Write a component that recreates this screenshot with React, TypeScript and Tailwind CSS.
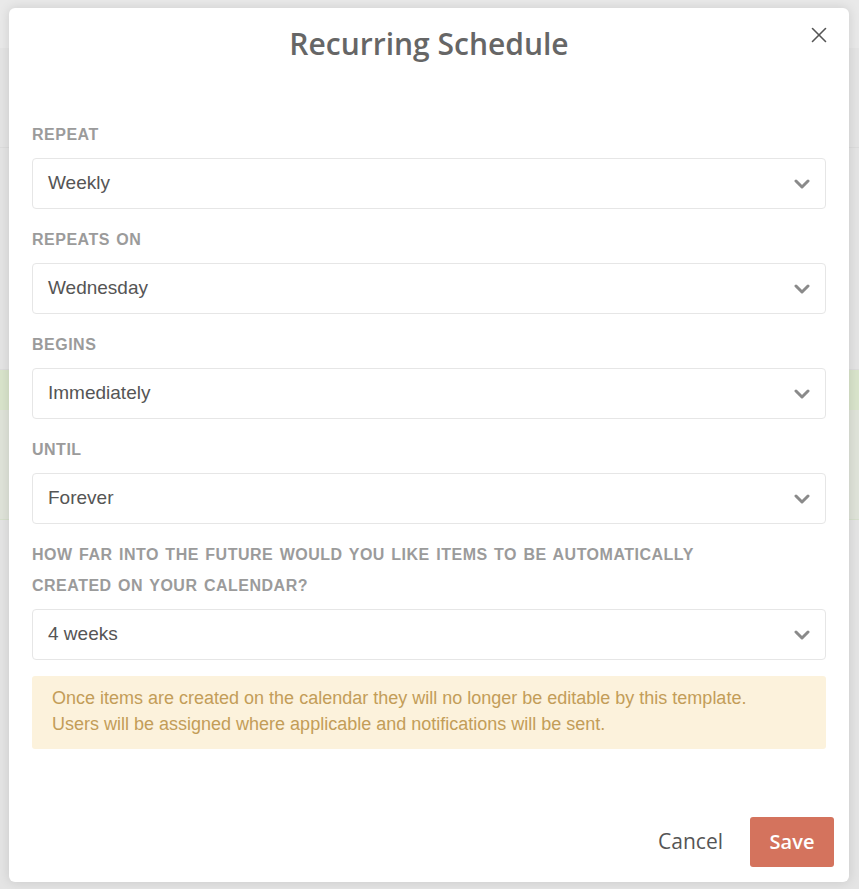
import { X } from "lucide-react";

const fields = [
  { label: "REPEAT", value: "Weekly" },
  { label: "REPEATS ON", value: "Wednesday" },
  { label: "BEGINS", value: "Immediately" },
  { label: "UNTIL", value: "Forever" },
  {
    label: "HOW FAR INTO THE FUTURE WOULD YOU LIKE ITEMS TO BE AUTOMATICALLY CREATED ON YOUR CALENDAR?",
    value: "4 weeks",
  },
];

const Chevron = () => (
  <svg width="16" height="12" viewBox="0 0 16 12" className="shrink-0">
    <polyline points="2,3 8,9 14,3" fill="none" stroke="#8a8a8a" strokeWidth="3" strokeLinecap="round" strokeLinejoin="round" />
  </svg>
);

const SelectField = ({ label, value }: { label: string; value: string }) => (
  <div className="mt-[15px] first:mt-0">
    <div className="mb-2 pr-[100px] text-[16px] font-bold leading-[31px] tracking-[0.5px] text-[#9b9b9b] [word-spacing:1.5px]">
      {label}
    </div>
    <div className="flex h-[51px] items-center justify-between rounded-[4px] border border-[#e6e6e6] bg-white px-[15px]">
      <span className="text-[19px] text-[#555]">{value}</span>
      <Chevron />
    </div>
  </div>
);

export default function App() {
  return (
    <div className="relative h-[889px] w-[859px] overflow-hidden bg-[#e4e4e4] font-['Liberation_Sans',Arial,sans-serif]">
      {/* faded page behind the overlay */}
      <div className="flex h-full flex-col">
        <div className="h-[48px] bg-[#e9e9e9]" />
        <div className="h-[100px] border-b border-[#dcdcdc]" />
        <div className="h-[222px] border-b border-[#dcdcdc]" />
        <div className="h-[40px] bg-[#d9e4cb]" />
        <div className="h-[110px] border-b border-[#d6dfcc] bg-[#dfe3d9]" />
        <div className="flex-1" />
      </div>

      <div className="absolute left-[9px] top-[8px] flex h-[874px] w-[840px] flex-col rounded-[6px] bg-white shadow-[0_0_12px_rgba(0,0,0,0.12)]">
        <div className="relative pt-[20px] text-center">
          <h1 className="font-['Open_Sans',sans-serif] text-[30px] font-semibold leading-[32px] text-[#666]">
            Recurring Schedule
          </h1>
          <button className="absolute right-[17px] top-[14px] text-[#555]" aria-label="Close">
            <X size={26} strokeWidth={1.5} />
          </button>
        </div>

        <div className="flex flex-1 flex-col px-[23px] pt-[59px]">
          {fields.map((f) => (
            <SelectField key={f.label} label={f.label} value={f.value} />
          ))}

          <div className="mt-4 rounded-[3px] bg-[#fcf2dc] px-5 pb-[12px] pt-[9px] text-[18px] leading-[26px] text-[#c39d58]">
            <p>Once items are created on the calendar they will no longer be editable by this template.</p>
            <p>Users will be assigned where applicable and notifications will be sent.</p>
          </div>

          <div className="mt-auto flex items-center justify-end gap-[27px] pb-[15px] font-['Open_Sans',sans-serif]">
            <button className="text-[21px] text-[#555]">Cancel</button>
            <button className="mr-[-8px] h-[50px] w-[84px] rounded-[3px] bg-[#d4735d] text-[20px] font-semibold text-white">
              Save
            </button>
          </div>
        </div>
      </div>
    </div>
  );
}
